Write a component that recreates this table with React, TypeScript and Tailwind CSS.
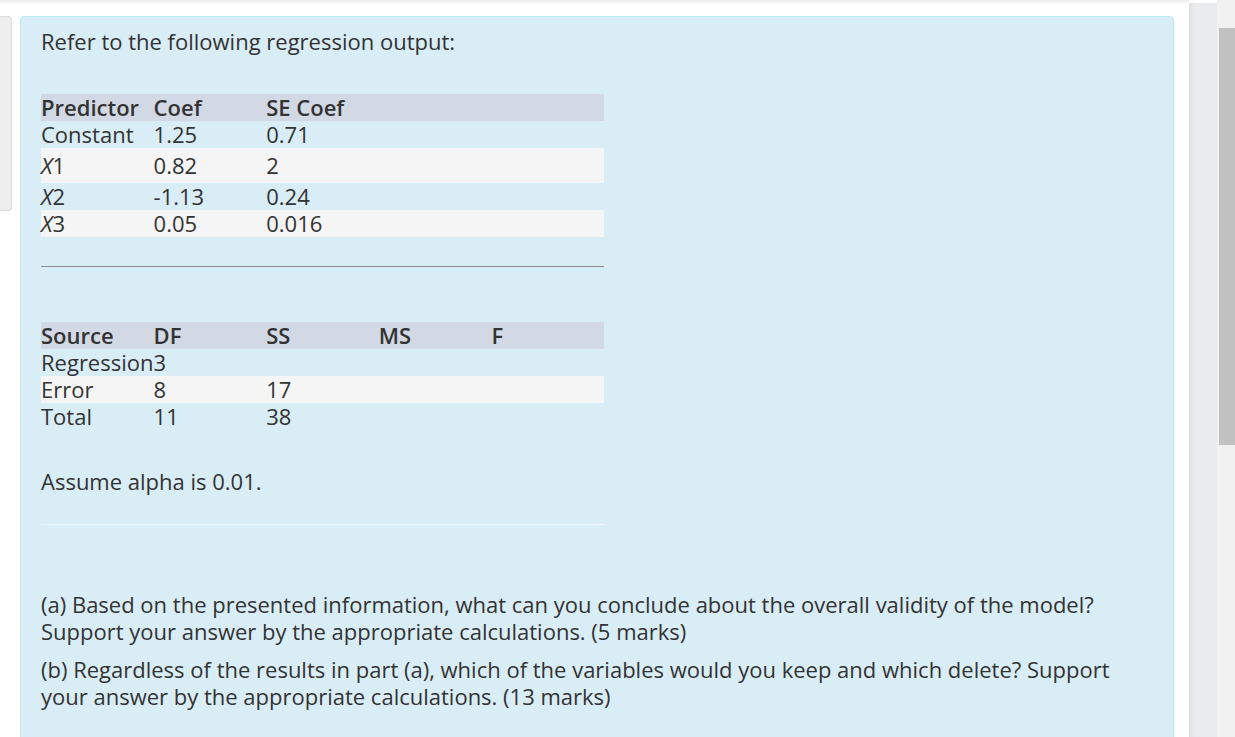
import React from "react";

const headCls = "h-[27px] bg-[#d2d9e5] font-semibold";

function Cell({ children }: { children?: React.ReactNode }) {
  return <div className="w-[112.6px] shrink-0 whitespace-nowrap">{children}</div>;
}

function Row({ cells, className }: { cells: React.ReactNode[]; className: string }) {
  return (
    <div className={"flex items-center w-[563px] " + className}>
      {cells.map((c, i) => (
        <Cell key={i}>{c}</Cell>
      ))}
    </div>
  );
}

const X = ({ n }: { n: string }) => (
  <span>
    <i>X</i>
    {n}
  </span>
);

export default function App() {
  return (
    <div className="w-[1235px] h-[737px] overflow-hidden flex bg-white font-['Open_Sans',sans-serif] text-[#333333] text-[22px] leading-[27px]">
      <div className="w-[1189px] shrink-0 flex flex-col">
        <div className="h-[5px] shrink-0 bg-gradient-to-b from-[#ececec] to-white" />
        <div className="flex items-start mt-[11px] shrink-0">
          <div className="w-[12px] h-[195px] bg-[#eeeeee] border border-l-0 border-[#dcdcdc] rounded-r-[4px]" />
          <div className="ml-[8px] w-[1154px] h-[760px] border border-[#bce8f1] bg-[#d9edf7] rounded-[4px] pt-[11px] px-[20px]">
            <p>Refer to the following regression output:</p>

            <div className="mt-[39px]">
              <Row className={headCls} cells={["Predictor", "Coef", "SE Coef", "", ""]} />
              <Row className="h-[27px]" cells={["Constant", "1.25", "0.71", "", ""]} />
              <Row className="h-[35px] bg-[#f5f5f5]" cells={[<X n="1" />, "0.82", "2", "", ""]} />
              <Row className="h-[27px]" cells={[<X n="2" />, "-1.13", "0.24", "", ""]} />
              <Row className="h-[27px] bg-[#f5f5f5]" cells={[<X n="3" />, "0.05", "0.016", "", ""]} />
            </div>

            <div className="mt-[29px] w-[563px] h-px bg-[#8a8a8a]" />

            <div className="mt-[55px]">
              <Row className={headCls} cells={["Source", "DF", "SS", "MS", "F"]} />
              <Row className="h-[27px]" cells={[<span>Regression3</span>, "", "", "", ""]} />
              <Row className="h-[27px] bg-[#f5f5f5]" cells={["Error", "8", "17", "", ""]} />
              <Row className="h-[27px]" cells={["Total", "11", "38", "", ""]} />
            </div>

            <p className="mt-[38px]">Assume alpha is 0.01.</p>

            <div className="mt-[29px] w-[563px] h-px bg-[#eef6fa]" />

            <p className="mt-[66px]">
              (a) Based on the presented information, what can you conclude about the overall validity of the model? Support your answer by the appropriate calculations. (5 marks)
            </p>
            <p className="mt-[11px]">
              (b) Regardless of the results in part (a), which of the variables would you keep and which delete? Support your answer by the appropriate calculations. (13 marks)
            </p>
          </div>
        </div>
      </div>
      <div className="w-[28px] shrink-0 mt-[3px] bg-[#e9ebec] shadow-[inset_4px_0_4px_-2px_rgba(0,0,0,0.06)]" />
      <div className="w-[18px] shrink-0 bg-[#f1f1f1] pt-[28px] pl-[2px]">
        <div className="w-[16px] h-[417px] bg-[#c1c1c1]" />
      </div>
    </div>
  );
}
